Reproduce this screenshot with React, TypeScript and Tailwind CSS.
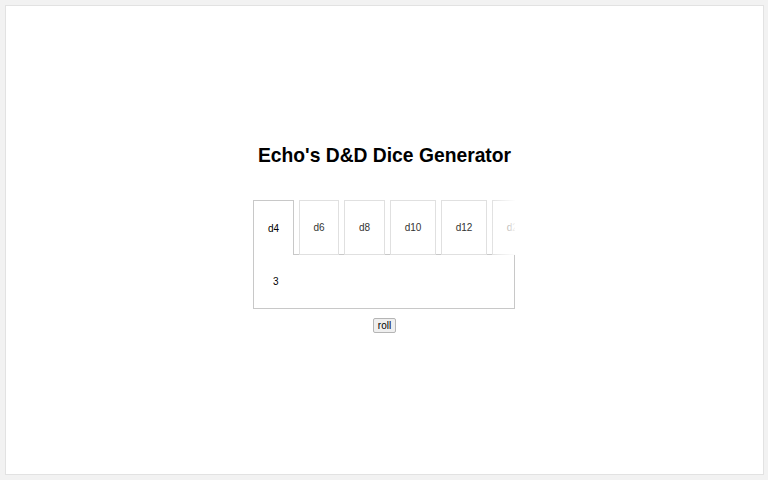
import React, { useState } from "react";

const dice = [
  { label: "d4", w: "w-[41px]" },
  { label: "d6", w: "w-[40px]" },
  { label: "d8", w: "w-[41px]" },
  { label: "d10", w: "w-[46px]" },
  { label: "d12", w: "w-[46px]" },
  { label: "d20", w: "w-[46px]" },
];

export default function App() {
  const [active] = useState(0);
  return (
    <div className="w-[768px] h-[480px] bg-[#f2f2f2] p-[5px] pr-[4px] pb-[5px]" style={{ fontFamily: '"Liberation Sans", Arial, sans-serif' }}>
      <div className="w-full h-full bg-white border border-[#e2e2e2] flex flex-col items-center pt-[139px]">
        <h1 className="text-[19.3px] leading-[22px] font-bold text-black">Echo's D&amp;D Dice Generator</h1>
        <div className="mt-[33px] w-[262px] -ml-[1px]">
          <div className="flex gap-[5px] overflow-hidden relative h-[55px]">
            {dice.map((d, i) => (
              <div
                key={d.label}
                className={
                  "shrink-0 h-[55px] flex items-center justify-center text-[10px] " +
                  d.w +
                  (i === active
                    ? " border border-b-0 border-[#c8c8c8] bg-white text-black relative z-10 h-[56px]"
                    : " border border-[#e0e0e0] text-[#333]")
                }
              >
                {d.label}
              </div>
            ))}
            <div className="absolute right-0 top-0 h-full w-[24px] bg-gradient-to-r from-white/0 to-white/95 z-20" />
          </div>
          <div className="h-[55px] border border-[#c8c8c8] -mt-[1px] flex items-center">
            <span className="text-[10px] ml-[19px] text-black">3</span>
          </div>
        </div>
        <button className="mt-[9px] px-[4px] h-[15px] text-[10px] leading-[13px] text-black bg-[#efefef] border border-[#b5b5b5] rounded-[2px]">
          roll
        </button>
      </div>
    </div>
  );
}
